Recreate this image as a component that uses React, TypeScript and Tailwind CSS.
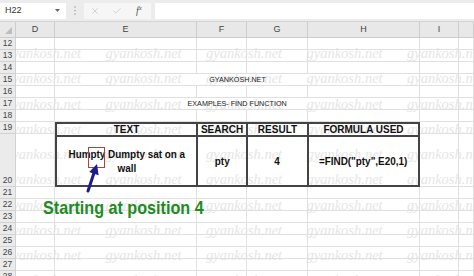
import { Check, X } from 'lucide-react';

const LETTERS = ['D', 'E', 'F', 'G', 'H', 'I', ''];
const ROWS = [12, 13, 14, 15, 16, 17, 18, 19, 20, 21, 22, 23, 24, 25, 26, 27, 28];

const cell = 'border-r border-b border-[#e0e0e0]';
const headCell = 'flex items-center justify-center bg-[#e8e8e8] border-r border-b border-[#cdcdcd] text-[9px] text-[#444]';

function RowLabel({ n }: { n: number }) {
    return (
        <div
            className={`flex justify-center bg-[#ebebeb] border-r border-b border-[#d2d2d2] text-[8.5px] leading-none text-[#444] ${
                n === 20 ? 'items-end pb-[2px]' : 'items-center'
            }`}
        >
            {n}
        </div>
    );
}

function FindTable() {
    return (
        <div className="col-span-4 row-span-2 grid grid-cols-[141px_50px_61px_1fr] grid-rows-[13px_1fr] border-2 border-[#444] font-bold text-[#111]">
            <div className="flex items-center justify-center border-r-2 border-b-2 border-[#444] text-[10px] leading-none">TEXT</div>
            <div className="flex items-center justify-center border-r-2 border-b-2 border-[#444] text-[10px] leading-none">SEARCH</div>
            <div className="flex items-center justify-center border-r-2 border-b-2 border-[#444] text-[10px] leading-none">RESULT</div>
            <div className="flex items-center justify-center border-b-2 border-[#444] text-[10px] leading-none">FORMULA USED</div>

            <div className="flex items-center justify-center border-r-2 border-[#444]">
                <div className="scale-x-90 text-center text-[11px] leading-[14.5px]">
                    Humpty Dumpty sat on a<br />wall
                </div>
            </div>
            <div className="flex items-center justify-center border-r-2 border-[#444]">
                <span className="scale-x-90 text-[11px]">pty</span>
            </div>
            <div className="flex items-center justify-center border-r-2 border-[#444]">
                <span className="scale-x-90 text-[11px]">4</span>
            </div>
            <div className="flex items-center justify-center">
                <span className="scale-x-90 whitespace-nowrap text-[11px]">=FIND("pty",E20,1)</span>
            </div>
        </div>
    );
}

function SheetRow({ n }: { n: number }) {
    if (n === 15 || n === 17) {
        return (
            <>
                <RowLabel n={n} />
                <div className={cell} />
                <div className={`col-span-4 flex items-center justify-center ${cell}`}>
                    <span className="scale-x-90 whitespace-nowrap text-[8px] text-[#222]">
                        {n === 15 ? 'GYANKOSH.NET' : 'EXAMPLES- FIND FUNCTION'}
                    </span>
                </div>
                <div className={cell} />
                <div className={cell} />
            </>
        );
    }
    if (n === 19) {
        return (
            <>
                <RowLabel n={n} />
                <div className={cell} />
                <FindTable />
                <div className={cell} />
                <div className={cell} />
            </>
        );
    }
    if (n === 20) {
        return (
            <>
                <RowLabel n={n} />
                <div className={cell} />
                <div className={cell} />
                <div className={cell} />
            </>
        );
    }
    return (
        <>
            <RowLabel n={n} />
            {LETTERS.map((l) => (
                <div key={l || 'J'} className={cell} />
            ))}
        </>
    );
}

// faint background watermark of the sheet
function Watermark() {
    return (
        <div className="absolute left-[5px] top-[41px] flex flex-col font-['Liberation_Serif',serif] text-[14.5px] italic leading-[25px] text-[#e6e6e6]">
            {Array.from({ length: 10 }).map((_, r) => (
                <div key={r} className="flex h-[25.25px]">
                    {Array.from({ length: 5 }).map((_, c) => (
                        <span key={c} className="w-[100.5px] whitespace-nowrap">
                            gyankosh.net
                        </span>
                    ))}
                </div>
            ))}
        </div>
    );
}

export default function App() {
    return (
        <div className="relative h-[276px] w-[474px] overflow-hidden bg-white font-['Liberation_Sans',Arial,sans-serif]">
            <Watermark />

            {/* formula bar */}
            <div className="relative z-10 flex h-[21px] items-center bg-[#ececec]">
                <div className="flex h-[16px] w-[66px] items-center justify-between bg-white pl-[5px] pr-[6px] text-[9px] text-[#333]">
                    <span>H22</span>
                    <svg width="5" height="3" viewBox="0 0 5 3">
                        <path d="M0 0h5L2.5 3z" fill="#666" />
                    </svg>
                </div>
                <div className="flex w-[18px] justify-center">
                    <svg width="2" height="9" viewBox="0 0 2 9">
                        <circle cx="1" cy="1" r="0.8" fill="#a0a0a0" />
                        <circle cx="1" cy="4.5" r="0.8" fill="#a0a0a0" />
                        <circle cx="1" cy="8" r="0.8" fill="#a0a0a0" />
                    </svg>
                </div>
                <div className="flex h-[16px] w-[67px] items-center bg-[#f6f6f6]">
                    <div className="flex w-[22px] justify-center">
                        <X size={10} strokeWidth={1.3} color="#b5b5b5" />
                    </div>
                    <div className="flex w-[22px] justify-center">
                        <Check size={10} strokeWidth={1.3} color="#b5b5b5" />
                    </div>
                    <div className="flex w-[22px] justify-center font-['Liberation_Serif',serif] text-[10px] italic text-[#555]">
                        f<span className="text-[7px]">x</span>
                    </div>
                </div>
                <div className="ml-[4px] h-[16px] flex-1 bg-white" />
            </div>

            {/* sheet */}
            <div className="relative z-10 grid grid-cols-[16px_39px_142px_50px_61px_112px_39px_1fr] grid-rows-[16px_repeat(8,12px)_53px_repeat(8,12px)] border-t border-[#d4d4d4]">
                <div className="relative bg-[#e8e8e8] border-r border-b border-[#cdcdcd]">
                    <svg className="absolute left-0 top-0" width="16" height="16" viewBox="0 0 16 16">
                        <path d="M12 5v7H5z" fill="#bdbdbd" />
                    </svg>
                </div>
                {LETTERS.map((l) => (
                    <div key={l || 'J'} className={headCell}>
                        {l}
                    </div>
                ))}
                {ROWS.map((n) => (
                    <SheetRow key={n} n={n} />
                ))}
            </div>

            {/* callout */}
            <div className="absolute left-[88px] top-[147px] z-20 h-[21px] w-[17px] border-[1.5px] border-[#b5403a]" />
            <svg className="absolute left-[80px] top-[158px] z-20" width="26" height="38" viewBox="0 0 26 38">
                <path d="M8 33 L13.8 15.5" stroke="#1c1c8c" strokeWidth="3" strokeLinecap="round" fill="none" />
                <path d="M17 6 L18.6 17.2 L9.2 14.1 Z" fill="#1c1c8c" />
            </svg>
            <div className="absolute left-[43px] top-[198px] z-20 origin-left scale-x-[0.85] whitespace-nowrap text-[19px] font-bold leading-none text-[#1f8b24]">
                Starting at position 4
            </div>
        </div>
    );
}
